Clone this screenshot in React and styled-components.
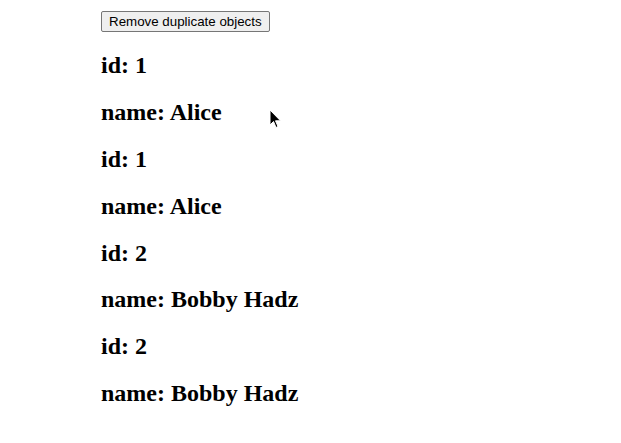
import React from 'react';
import styled, { createGlobalStyle } from 'styled-components';

const GlobalStyle = createGlobalStyle`
	body {
		margin: 0;
		background: #fff;
		font-family: "Liberation Serif", "Times New Roman", serif;
	}
`;

const Page = styled.div`
	padding: 11px 0 0 101px;
`;

const Button = styled.button`
	display: block;
	font-family: "Liberation Sans", Arial, sans-serif;
	font-size: 13.33px;
	color: #000;
	background-color: #efefef;
	border: 1px solid #767676;
	border-radius: 2px;
	padding: 1px 7px;
	height: 21px;
`;

const Heading = styled.h2`
	font-size: 24px;
	font-weight: bold;
	margin: 19.92px 0;
	color: #000;
`;

const Cursor = styled.svg`
	position: absolute;
	left: 269px;
	top: 109px;
`;

const employees = [
	{ id: 1, name: 'Alice' },
	{ id: 1, name: 'Alice' },
	{ id: 2, name: 'Bobby Hadz' },
	{ id: 2, name: 'Bobby Hadz' },
];

export default function App() {
	return (
		<>
			<GlobalStyle />
			<Page>
				<Button>Remove duplicate objects</Button>
				{employees.map((employee, index) => (
					<div key={index}>
						<Heading>id: {employee.id}</Heading>
						<Heading>name: {employee.name}</Heading>
					</div>
				))}
			</Page>
			<Cursor width="14" height="21" viewBox="0 0 14 21">
				<path d="M1 1 L1 16 L4.5 12.5 L7 18.5 L9 17.5 L6.5 11.8 L11.5 11.8 Z" fill="#000" stroke="#fff" strokeWidth="1" />
			</Cursor>
		</>
	);
}
